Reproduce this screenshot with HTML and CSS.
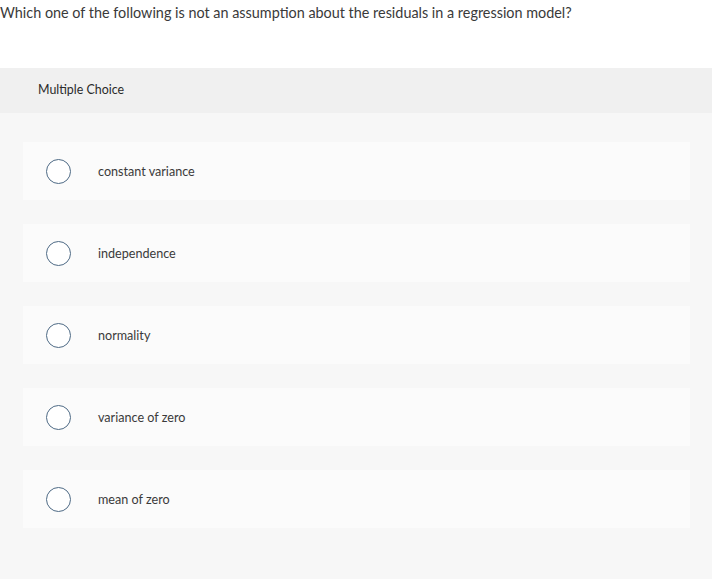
FILE: index.html
```html
<!DOCTYPE html>
<html lang="en">
<head>
    <meta charset="UTF-8" />
    <title>Multiple Choice</title>
    <link rel="stylesheet" href="styles.css">
</head>
<body>
    <p class="question">Which one of the following is not an assumption about the residuals in a regression model?</p>

    <div class="quiz">
        <div class="quiz-head">Multiple Choice</div>

        <div class="choices">
            <label class="choice">
                <span class="radio"></span>
                <span class="choice-text">constant variance</span>
            </label>
            <label class="choice">
                <span class="radio"></span>
                <span class="choice-text">independence</span>
            </label>
            <label class="choice">
                <span class="radio"></span>
                <span class="choice-text">normality</span>
            </label>
            <label class="choice">
                <span class="radio"></span>
                <span class="choice-text">variance of zero</span>
            </label>
            <label class="choice">
                <span class="radio"></span>
                <span class="choice-text">mean of zero</span>
            </label>
        </div>
    </div>
</body>
</html>
```

FILE: styles.css
```css
body {
    margin: 0;
    font-family: Lato, "Open Sans", Arial, sans-serif;
    color: #3a3a3a;
    background-color: #fff;
}

.question {
    margin: 0;
    padding: 4px 0 0 0;
    height: 64px;
    font-size: 14.4px;
    line-height: 18px;
    color: #3a3a3a;
}

.quiz {
    background-color: #f7f7f7;
    min-height: 511px;
}

.quiz-head {
    background-color: #f0f0f0;
    height: 45px;
    padding-left: 38px;
    font-size: 12.4px;
    line-height: 43px;
    color: #2a2a2a;
}

.choices {
    display: flex;
    flex-direction: column;
    gap: 24px;
    padding: 29px 22px 0 23px;
}

.choice {
    display: flex;
    align-items: center;
    height: 58px;
    background-color: #fbfbfb;
    cursor: pointer;
}

.radio {
    width: 23px;
    height: 23px;
    margin-left: 23px;
    border: 1.3px solid #4e6a85;
    border-radius: 50%;
    background: #fff;
}

.choice-text {
    margin-left: 27px;
    font-size: 12.6px;
    color: #3a3a3a;
}
```
